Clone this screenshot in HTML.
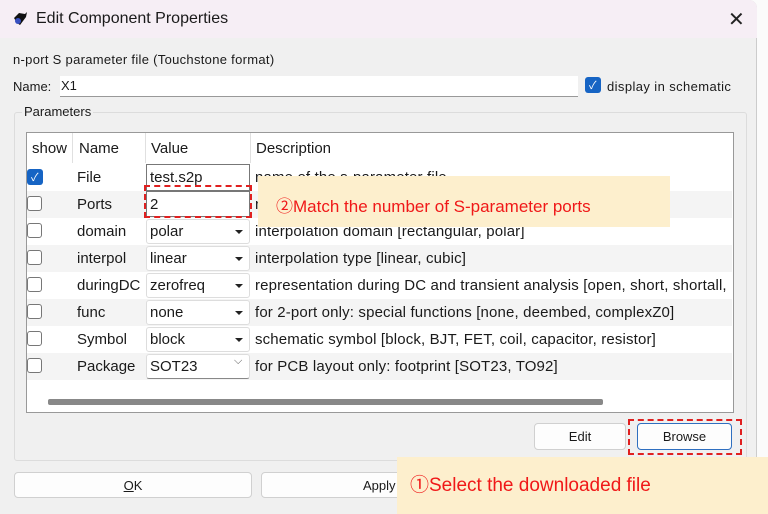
<!DOCTYPE html>
<html><head><meta charset="utf-8"><style>
*{box-sizing:border-box;margin:0;padding:0}
body{width:768px;height:514px;overflow:hidden;background:#fbfbfb;font-family:"Liberation Sans","Noto Sans CJK JP",sans-serif;position:relative;font-size:14px;color:#1a1a1a}
.a{position:absolute}
.win{left:0;top:0;width:757px;height:514px;background:#f0f0f0;border-right:1px solid #ccc;border-radius:0 8px 0 0}
.title{left:0;top:0;width:757px;height:38px;background:#f6eef5;border-radius:0 8px 0 0}
.cb{width:15px;height:15px;border:1px solid #777;border-radius:3px;background:#fff}
.cbc{width:16px;height:16px;border-radius:3px;background:#1664c4}
.row{left:27px;width:705px;height:27px}
.t{font-size:15px;white-space:nowrap}
.d{font-size:15px;white-space:nowrap;letter-spacing:0.15px}
.btn{background:#fdfdfd;border:1px solid #d0d0d0;border-radius:4px;text-align:center;font-size:13px;line-height:25px}
.sel{left:146px;width:104px;height:25px;background:#fff;border:1px solid #ddd;border-radius:3px}
.arr{position:absolute;right:6px;top:10px;border-left:4px solid transparent;border-right:4px solid transparent;border-top:4px solid #222}
</style></head><body>
<div class="a win"></div>
<div class="a title"></div>
<svg class="a" style="left:10px;top:9px" width="20" height="20" viewBox="0 0 20 20"><path d="M4 9 L9 4 L15 5 L17 3 L16 8 L13 12 L10 16 L7 14 Z" fill="#111"/><circle cx="8" cy="12" r="3" fill="#3850c0"/></svg>
<div class="a t" style="left:36px;top:10px;font-size:16px">Edit Component Properties</div>
<div class="a" style="left:728px;top:7px;font-size:20px;color:#222">✕</div>
<div class="a" style="left:13px;top:52px;font-size:13px;letter-spacing:0.3px">n-port S parameter file (Touchstone format)</div>
<div class="a" style="left:13px;top:79px;font-size:13px">Name:</div>
<div class="a" style="left:60px;top:76px;width:518px;height:21px;background:#fff;border-bottom:1px solid #999;font-size:13px;padding:2px 1px">X1</div>
<div class="a cbc" style="left:585px;top:77px"></div>
<div class="a" style="left:589px;top:77px;color:#fff;font-size:11px">✓</div>
<div class="a" style="left:607px;top:79px;font-size:13px;letter-spacing:0.4px">display in schematic</div>
<div class="a" style="left:14px;top:112px;width:733px;height:349px;border:1px solid #dcdcdc;border-radius:3px"></div>
<div class="a" style="left:22px;top:104px;font-size:13px;background:#f0f0f0;padding:0 2px">Parameters</div>
<div class="a" style="left:26px;top:132px;width:708px;height:281px;background:#fff;border:1px solid #999"></div>
<div class="a" style="left:27px;top:133px;width:706px;height:30px;background:#fff"></div>
<div class="a" style="left:72px;top:133px;width:1px;height:30px;background:#e0e0e0"></div>
<div class="a" style="left:145px;top:133px;width:1px;height:30px;background:#e0e0e0"></div>
<div class="a" style="left:250px;top:133px;width:1px;height:30px;background:#e0e0e0"></div>
<div class="a t" style="left:32px;top:140px">show</div>
<div class="a t" style="left:79px;top:140px">Name</div>
<div class="a t" style="left:151px;top:140px">Value</div>
<div class="a t" style="left:256px;top:140px">Description</div>

<div class="a row" style="top:164px;background:#fff"></div>
<div class="a row" style="top:191px;background:#f4f4f4"></div>
<div class="a row" style="top:218px;background:#fff"></div>
<div class="a row" style="top:245px;background:#f4f4f4"></div>
<div class="a row" style="top:272px;background:#fff"></div>
<div class="a row" style="top:299px;background:#f4f4f4"></div>
<div class="a row" style="top:326px;background:#fff"></div>
<div class="a row" style="top:353px;background:#f4f4f4"></div>

<div class="a cbc" style="left:27px;top:169px"></div><div class="a" style="left:31px;top:169px;color:#fff;font-size:11px">✓</div>
<div class="a cb" style="left:27px;top:196px"></div>
<div class="a cb" style="left:27px;top:223px"></div>
<div class="a cb" style="left:27px;top:250px"></div>
<div class="a cb" style="left:27px;top:277px"></div>
<div class="a cb" style="left:27px;top:304px"></div>
<div class="a cb" style="left:27px;top:331px"></div>
<div class="a cb" style="left:27px;top:358px"></div>

<div class="a t" style="left:77px;top:169px">File</div>
<div class="a t" style="left:77px;top:196px">Ports</div>
<div class="a t" style="left:77px;top:223px">domain</div>
<div class="a t" style="left:77px;top:250px">interpol</div>
<div class="a t" style="left:77px;top:277px">duringDC</div>
<div class="a t" style="left:77px;top:304px">func</div>
<div class="a t" style="left:77px;top:331px">Symbol</div>
<div class="a t" style="left:77px;top:358px">Package</div>

<div class="a" style="left:146px;top:164px;width:104px;height:27px;background:#fff;border:1px solid #777"></div>
<div class="a t" style="left:150px;top:169px">test.s2p</div>
<div class="a" style="left:146px;top:191px;width:104px;height:26px;background:#fff;border:1px solid #777"></div>
<div class="a t" style="left:150px;top:196px">2</div>
<div class="a sel" style="top:219px"><span class="arr"></span></div><div class="a t" style="left:150px;top:223px">polar</div>
<div class="a sel" style="top:246px"><span class="arr"></span></div><div class="a t" style="left:150px;top:250px">linear</div>
<div class="a sel" style="top:273px"><span class="arr"></span></div><div class="a t" style="left:150px;top:277px">zerofreq</div>
<div class="a sel" style="top:300px"><span class="arr"></span></div><div class="a t" style="left:150px;top:304px">none</div>
<div class="a sel" style="top:327px"><span class="arr"></span></div><div class="a t" style="left:150px;top:331px">block</div>
<div class="a sel" style="top:354px;border-bottom:1px solid #888"></div><div class="a" style="left:234px;top:355px;font-size:11px;color:#555">⌵</div><div class="a t" style="left:150px;top:358px">SOT23</div>

<div class="a d" style="left:255px;top:169px">name of the s-parameter file</div>
<div class="a d" style="left:255px;top:196px">number of ports</div>
<div class="a d" style="left:255px;top:223px">interpolation domain [rectangular, polar]</div>
<div class="a d" style="left:255px;top:250px">interpolation type [linear, cubic]</div>
<div class="a d" style="left:255px;top:277px">representation during DC and transient analysis [open, short, shortall,</div>
<div class="a d" style="left:255px;top:304px">for 2-port only: special functions [none, deembed, complexZ0]</div>
<div class="a d" style="left:255px;top:331px">schematic symbol [block, BJT, FET, coil, capacitor, resistor]</div>
<div class="a d" style="left:255px;top:358px">for PCB layout only: footprint [SOT23, TO92]</div>

<div class="a" style="left:48px;top:399px;width:555px;height:6px;background:#888;border-radius:2px"></div>

<div class="a" style="left:258px;top:176px;width:412px;height:51px;background:#fdefcd"></div>
<div class="a" style="left:276px;top:192px;color:#f01818;font-size:17px;white-space:nowrap">②Match the number of S-parameter ports</div>
<div class="a" style="left:144px;top:185px;width:108px;height:33px;border:2px dashed #e02020"></div>

<div class="a btn" style="left:534px;top:423px;width:92px;height:27px">Edit</div>
<div class="a btn" style="left:637px;top:423px;width:95px;height:27px;border:1px solid #2f6fc0">Browse</div>
<div class="a" style="left:628px;top:419px;width:114px;height:36px;border:2px dashed #e02020"></div>

<div class="a btn" style="left:14px;top:472px;width:238px;height:26px"><u>O</u>K</div>
<div class="a btn" style="left:261px;top:472px;width:200px;height:26px;text-align:left;padding-left:101px">Apply</div>
<div class="a" style="left:397px;top:457px;width:371px;height:57px;background:#fdefcd"></div>
<div class="a" style="left:410px;top:470px;color:#f01818;font-size:19px;white-space:nowrap">①Select the downloaded file</div>
</body></html>
